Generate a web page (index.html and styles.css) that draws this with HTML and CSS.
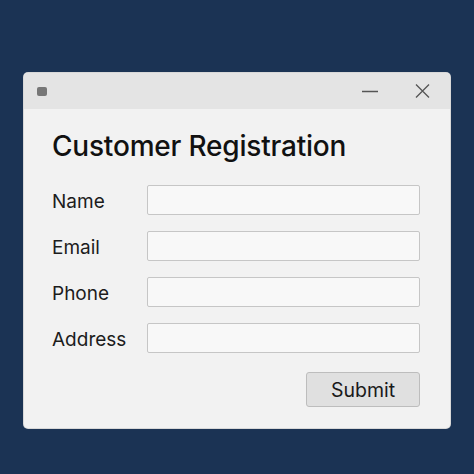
FILE: index.html
```html
<!DOCTYPE html>
<html>
<head>
<meta charset="utf-8">
<link rel="stylesheet" href="styles.css">
</head>
<body>
<div class="window">
  <div class="titlebar">
    <span class="app-icon"></span>
    <div class="controls">
      <svg class="ctl" width="16" height="14" viewBox="0 0 16 14"><path d="M0 7.5H16" stroke="#555" stroke-width="1.3"/></svg>
      <svg class="ctl" width="15" height="14" viewBox="0 0 15 14"><path d="M1 0.5L14 13.5M14 0.5L1 13.5" stroke="#555" stroke-width="1.3"/></svg>
    </div>
  </div>
  <div class="content">
    <h1 class="title">Customer Registration</h1>
    <div class="form">
      <div class="row"><label class="label">Name</label><div class="input"></div></div>
      <div class="row"><label class="label">Email</label><div class="input"></div></div>
      <div class="row"><label class="label">Phone</label><div class="input"></div></div>
      <div class="row"><label class="label">Address</label><div class="input"></div></div>
    </div>
    <div class="actions"><button class="submit">Submit</button></div>
  </div>
</div>
</body>
</html>
```
FILE: styles.css
```css
html, body {
  margin: 0;
  padding: 0;
}
body {
  background: #1b3354;
  width: 474px;
  height: 474px;
  overflow: hidden;
  font-family: Inter, "Noto Sans", sans-serif;
  color: #1a1a1a;
}
.window {
  margin: 73px 0 0 24px;
  width: 426px;
  height: 355px;
  background: #f2f2f2;
  border-radius: 4px;
  overflow: hidden;
  box-shadow: 0 0 0 1px #d8d8d8;
  display: flex;
  flex-direction: column;
}
.titlebar {
  height: 36px;
  background: #e4e4e4;
  display: flex;
  align-items: center;
  padding: 0 20px 0 13px;
  flex: none;
}
.app-icon {
  width: 10px;
  height: 9px;
  background: #777;
  border-radius: 2px;
  margin-top: 1px;
}
.controls {
  margin-left: auto;
  display: flex;
  align-items: center;
  gap: 37px;
}
.ctl { display: block; }
.content {
  padding: 0 30px 0 28px;
}
.title {
  margin: 20px 0 0 0;
  font-size: 28px;
  font-weight: 500;
  line-height: 34px;
  letter-spacing: -0.2px;
  color: #111;
}
.form {
  margin-top: 22px;
  display: flex;
  flex-direction: column;
  gap: 16px;
}
.row {
  display: flex;
  align-items: center;
}
.label {
  width: 95px;
  font-size: 19px;
  color: #1c1c1c;
  padding-top: 2px;
}
.input {
  flex: 1;
  height: 28px;
  background: #f8f8f8;
  border: 1px solid #c6c6c6;
  border-radius: 2px;
}
.actions {
  display: flex;
  justify-content: flex-end;
  margin-top: 19px;
}
.submit {
  width: 114px;
  height: 35px;
  background: #e0e0e0;
  border: 1px solid #bdbdbd;
  border-radius: 3px;
  font-family: Inter, "Noto Sans", sans-serif;
  font-size: 19.5px;
  color: #1a1a1a;
  padding: 0;
}
```
